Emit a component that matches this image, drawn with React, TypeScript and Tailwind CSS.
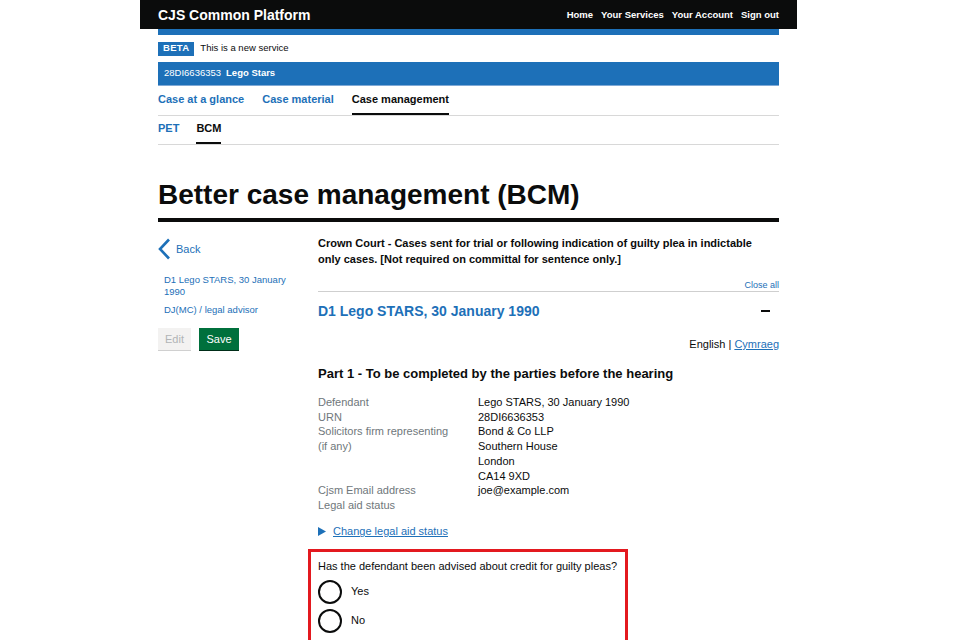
import React from "react";

const rows: [string, string][] = [
  ["Defendant", "Lego STARS, 30 January 1990"],
  ["URN", "28DI6636353"],
  ["Solicitors firm representing", "Bond & Co LLP"],
  ["(if any)", "Southern House"],
  ["", "London"],
  ["", "CA14 9XD"],
  ["Cjsm Email address", "joe@example.com"],
  ["Legal aid status", ""],
];

export default function App() {
  return (
    <div className="w-[960px] h-[640px] overflow-hidden bg-white text-[#0b0c0c] font-['Liberation_Sans',Arial,sans-serif]">
      {/* Header */}
      <div className="ml-[140px] w-[657px] h-[29px] bg-[#0b0c0c] flex items-center justify-between px-[18px]">
        <div className="text-white font-bold text-[14px] leading-none">CJS Common Platform</div>
        <div className="flex gap-[8px] text-white font-bold text-[9.5px] leading-none">
          <span>Home</span>
          <span>Your Services</span>
          <span>Your Account</span>
          <span>Sign out</span>
        </div>
      </div>

      <div className="ml-[158px] w-[621px]">
        <div className="h-[6px] bg-[#1d70b8]" />
        <div className="h-[27px] flex items-center gap-[6px]">
          <span className="h-[14px] px-[5px] bg-[#1d70b8] text-white font-bold text-[9.5px] flex items-center tracking-[0.3px]">BETA</span>
          <span className="text-[9.5px]">This is a new service</span>
        </div>
        <div className="h-[24px] bg-[#1d70b8] border-b border-[#7fa9d6] flex items-center px-[6px] text-white text-[9.5px] gap-[5px]">
          <span>28DI6636353</span>
          <span className="font-bold">Lego Stars</span>
        </div>

        {/* Tabs */}
        <div className="h-[30px] border-b border-[#d8d8d8] flex gap-[18px] text-[11px] font-bold">
          <span className="h-[29px] flex items-center text-[#1d70b8] border-b-[2px] border-transparent">Case at a glance</span>
          <span className="h-[29px] flex items-center text-[#1d70b8] border-b-[2px] border-transparent">Case material</span>
          <span className="h-[29px] flex items-center text-[#0b0c0c] border-b-[2px] border-[#0b0c0c]">Case management</span>
        </div>
        <div className="h-[29px] border-b border-[#d8d8d8] flex gap-[17px] text-[11px] font-bold">
          <span className="h-[28px] flex items-center pb-[2px] text-[#1d70b8] border-b-[2px] border-transparent">PET</span>
          <span className="h-[28px] flex items-center pb-[2px] text-[#0b0c0c] border-b-[2px] border-[#0b0c0c]">BCM</span>
        </div>

        <h1 className="mt-[36px] text-[28px] leading-[28px] font-bold">Better case management (BCM)</h1>
        <div className="mt-[9px] h-[4px] bg-[#0b0c0c]" />

        <div className="flex">
          {/* Left column */}
          <div className="w-[160px] pt-[16px]">
            <div className="h-[22px] flex items-center gap-[6px] text-[#1d70b8] text-[11px]">
              <svg width="12" height="22" viewBox="0 0 12 22">
                <path d="M11 1.5 L2 11 L11 20.5" fill="none" stroke="#1d70b8" strokeWidth="2.6" />
              </svg>
              <span>Back</span>
            </div>
            <div className="mt-[14px] pl-[6px] w-[134px] text-[9.5px] leading-[12px] text-[#1d70b8]">
              D1 Lego STARS, 30 January 1990
            </div>
            <div className="mt-[6px] pl-[6px] text-[9.5px] leading-[12px] text-[#1d70b8]">DJ(MC) / legal advisor</div>
            <div className="mt-[12px] flex gap-[8px]">
              <span className="h-[22px] w-[33px] flex items-center justify-center bg-[#f3f2f1] text-[#b1b4b6] text-[11px] shadow-[0_1px_0_#d0d0d0]">Edit</span>
              <span className="h-[22px] w-[40px] flex items-center justify-center bg-[#00703c] text-white text-[11px] shadow-[0_1px_0_#002d18]">Save</span>
            </div>
          </div>

          {/* Right column */}
          <div className="w-[461px] pt-[13px]">
            <p className="pr-[16px] text-[11px] leading-[16px] font-bold">
              Crown Court - Cases sent for trial or following indication of guilty plea in indictable only cases. [Not required on committal for sentence only.]
            </p>
            <div className="mt-[12px] border-b border-[#cfcfcf] text-right text-[9px] leading-[12px] text-[#1d70b8]">Close all</div>
            <div className="mt-[9px] h-[20px] flex items-center justify-between pr-[9px]">
              <span className="text-[14px] font-bold text-[#1d70b8]">D1 Lego STARS, 30 January 1990</span>
              <span className="w-[9px] h-[2px] bg-[#0b0c0c]" />
            </div>
            <div className="mt-[16px] text-right text-[11px] leading-[14px]">
              English | <span className="text-[#1d70b8] underline">Cymraeg</span>
            </div>
            <h2 className="mt-[14px] text-[13px] leading-[18px] font-bold">Part 1 - To be completed by the parties before the hearing</h2>
            <div className="mt-[12px] text-[11px] leading-[14.7px]">
              {rows.map(([l, v], i) => (
                <div key={i} className="flex">
                  <span className="w-[160px] text-[#6f777b]">{l}</span>
                  <span>{v}</span>
                </div>
              ))}
            </div>
            <div className="mt-[12px] h-[14px] flex items-center gap-[7px] text-[11px]">
              <svg width="8" height="9" viewBox="0 0 8 9">
                <path d="M0 0 L8 4.5 L0 9 Z" fill="#1d70b8" />
              </svg>
              <span className="text-[#1d70b8] underline">Change legal aid status</span>
            </div>
            <div className="mt-[10px] -ml-[10px] w-[320px] h-[100px] border-[3px] border-[#e3191f] pl-[7px] pt-[7px]">
              <div className="text-[11px] leading-[14px]">Has the defendant been advised about credit for guilty pleas?</div>
              <div className="mt-[7px] flex items-center gap-[9px]">
                <span className="w-[24px] h-[24px] rounded-full border-[2px] border-[#0b0c0c]" />
                <span className="text-[11px]">Yes</span>
              </div>
              <div className="mt-[5px] flex items-center gap-[9px]">
                <span className="w-[24px] h-[24px] rounded-full border-[2px] border-[#0b0c0c]" />
                <span className="text-[11px]">No</span>
              </div>
            </div>
          </div>
        </div>
      </div>
    </div>
  );
}
